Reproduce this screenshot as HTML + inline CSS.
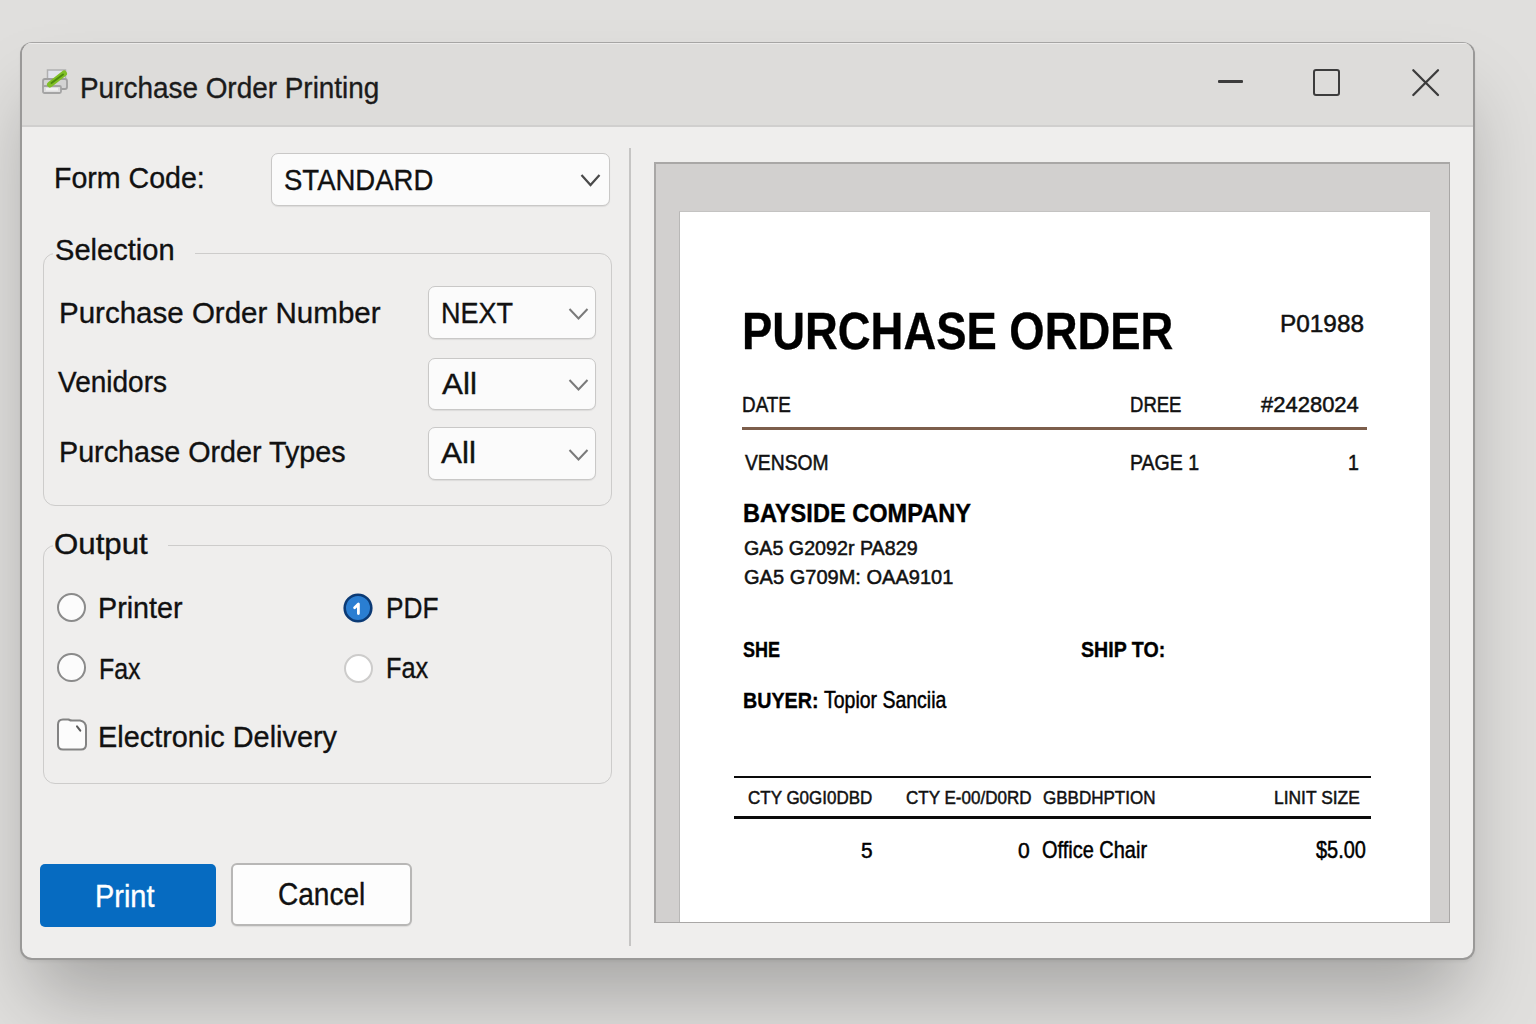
<!DOCTYPE html>
<html><head><meta charset="utf-8">
<style>
html,body{margin:0;padding:0;width:1536px;height:1024px;overflow:hidden;background:#e0dfdd;font-family:"Liberation Sans",sans-serif;}
.a{position:absolute;box-sizing:border-box;}
.t{position:absolute;white-space:nowrap;line-height:1;transform-origin:0 0;font-family:"Liberation Sans",sans-serif;-webkit-text-stroke:0.35px currentColor;}
#win{position:absolute;left:20px;top:42px;width:1455px;height:918px;box-sizing:border-box;border:2px solid #9a9998;border-top:1.5px solid #a6a5a4;border-radius:12px;background:#efeeed;box-shadow:0 48px 72px -12px rgba(0,0,0,0.26),0 2px 3px rgba(0,0,0,0.05);overflow:hidden;}
#tb{position:absolute;left:0;top:0;right:0;height:82px;background:#dddcda;border-bottom:2px solid #d0cfce;box-shadow:inset 0 1px 0 #ecebea;}
.dd{position:absolute;box-sizing:border-box;background:#fbfbfb;border:1.5px solid #c9c8c7;border-radius:7px;box-shadow:0 1px 1px rgba(0,0,0,0.08);}
.grp{position:absolute;box-sizing:border-box;border:1.5px solid #cdcccb;border-radius:12px;}
.gap{position:absolute;background:#efeeed;}
.radio{position:absolute;box-sizing:border-box;border-radius:50%;}
</style></head><body>
<div id="win"><div id="tb"></div></div>

<!-- title icon -->
<svg class="a" style="left:40px;top:66px" width="32" height="30" viewBox="0 0 32 30">
 <rect x="7.5" y="4" width="18" height="13" fill="#e2e4ec" stroke="#b0b0b0" stroke-width="1.5"/>
 <rect x="3" y="13" width="24" height="10" rx="2" fill="#d3d3d3" stroke="#a0a0a0" stroke-width="1.8"/>
 <rect x="3" y="20" width="18" height="7" rx="1.5" fill="#dedede" stroke="#a4a4a4" stroke-width="1.8"/>
 <rect x="6" y="22" width="12" height="2.5" fill="#f2f2f2"/>
 <path d="M10 18.5 L24 7.5" stroke="#7fbf26" stroke-width="6" stroke-linecap="round"/>
 <path d="M11.5 17 L23 8.5" stroke="#4f8c0e" stroke-width="2" stroke-linecap="round"/>
</svg>

<!-- window controls -->
<div class="a" style="left:1218px;top:80px;width:25px;height:2.5px;background:#3c3c3c;border-radius:1px"></div>
<div class="a" style="left:1313px;top:69px;width:27px;height:26.5px;border:2.5px solid #3c3c3c;border-radius:3px"></div>
<svg class="a" style="left:1410px;top:67px" width="32" height="32" viewBox="0 0 32 32">
 <path d="M3.3 3.3 L28 28 M28 3.3 L3.3 28" stroke="#3c3c3c" stroke-width="2.3" stroke-linecap="round"/>
</svg>

<!-- separator -->
<div class="a" style="left:629px;top:148px;width:1.5px;height:798px;background:#c6c5c4"></div>

<!-- form code dropdown -->
<div class="dd" style="left:271px;top:152.5px;width:338.5px;height:53px"></div>
<svg class="a" style="left:578px;top:171px" width="26" height="18" viewBox="0 0 26 18"><path d="M3.5 4 L12.5 14 L21.5 4" fill="none" stroke="#4a4a4a" stroke-width="2.2"/></svg>

<!-- selection group -->
<div class="grp" style="left:43px;top:253px;width:568.5px;height:253px"></div>
<div class="gap" style="left:53px;top:248px;width:142px;height:10px"></div>

<div class="dd" style="left:428px;top:285.7px;width:168px;height:53.5px"></div>
<div class="dd" style="left:428px;top:358px;width:168px;height:52.4px"></div>
<div class="dd" style="left:428px;top:427.2px;width:168px;height:52.8px"></div>
<svg class="a" style="left:566px;top:305px" width="26" height="18" viewBox="0 0 26 18"><path d="M3.5 4 L12.5 13.5 L21.5 4" fill="none" stroke="#7a7a7a" stroke-width="2"/></svg>
<svg class="a" style="left:566px;top:376px" width="26" height="18" viewBox="0 0 26 18"><path d="M3.5 4 L12.5 13.5 L21.5 4" fill="none" stroke="#7a7a7a" stroke-width="2"/></svg>
<svg class="a" style="left:566px;top:445.5px" width="26" height="18" viewBox="0 0 26 18"><path d="M3.5 4 L12.5 13.5 L21.5 4" fill="none" stroke="#7a7a7a" stroke-width="2"/></svg>

<!-- output group -->
<div class="grp" style="left:43px;top:545px;width:569px;height:239px"></div>
<div class="gap" style="left:53px;top:540px;width:115px;height:10px"></div>

<div class="radio" style="left:56.8px;top:593.3px;width:29px;height:29px;border:2px solid #8b8b8b;background:#fcfcfc"></div>
<div class="radio" style="left:57px;top:653px;width:28.5px;height:28.5px;border:2px solid #8b8b8b;background:#fcfcfc"></div>
<svg class="a" style="left:342px;top:592px" width="32" height="32" viewBox="0 0 32 32">
 <circle cx="16" cy="16" r="13.3" fill="#2a7ed2" stroke="#0b3a75" stroke-width="2.6"/>
 <path d="M12.6 15.8 L16.4 12 L16.4 21.6" fill="none" stroke="#ffffff" stroke-width="2.8" stroke-linejoin="round" stroke-linecap="round"/>
</svg>
<div class="radio" style="left:344.3px;top:653.5px;width:29px;height:29px;border:2px solid #cdcccb;background:#ffffff"></div>
<svg class="a" style="left:50px;top:710px" width="45" height="50" viewBox="0 0 45 50">
 <path d="M8 14.5 Q8 9.5 13 9.5 L18.5 9.5 Q21 10.8 23 10.5 L30 10.5 Q36 11.5 36 18 L36 34.5 Q36 39.5 31 39.5 L13 39.5 Q8 39.5 8 34.5 Z" fill="#fcfcfc" stroke="#838383" stroke-width="2"/>
 <path d="M27 16.3 L30.3 20.6" stroke="#5a5a5a" stroke-width="2" stroke-linecap="round"/>
</svg>

<!-- buttons -->
<div class="a" style="left:40px;top:864.3px;width:175.5px;height:62.7px;background:#066bc1;border-radius:5px"></div>
<div class="a" style="left:230.5px;top:863px;width:181px;height:62.5px;background:#fdfdfd;border:2px solid #b8b7b6;border-radius:6px;box-shadow:0 1px 1px rgba(0,0,0,0.08)"></div>

<!-- preview -->
<div class="a" style="left:654px;top:162.4px;width:796px;height:760.8px;background:#d2d0cf;border:2px solid #a9a7a6;border-right-width:1.5px;border-bottom-width:1.5px"></div>
<div class="a" style="left:678.6px;top:211.2px;width:751px;height:711px;background:#ffffff;border-left:1.5px solid #b9b8b7;border-top:1.5px solid #c4c3c2"></div>
<div class="a" style="left:741.5px;top:427px;width:625.3px;height:2.6px;background:#7c5e4b"></div>
<div class="a" style="left:733.6px;top:775.5px;width:637.4px;height:2.8px;background:#0a0a0a"></div>
<div class="a" style="left:733.6px;top:816px;width:637.4px;height:2.8px;background:#0a0a0a"></div>

<div class="t" style="left:79.51px;top:73.1px;font-size:29.5px;font-weight:400;color:#1b1b1b;transform:scaleX(0.946);-webkit-text-stroke-width:0.35px">Purchase Order Printing</div>
<div class="t" style="left:53.5px;top:163.4px;font-size:30px;font-weight:400;color:#111;transform:scaleX(0.9519);-webkit-text-stroke-width:0.35px">Form Code:</div>
<div class="t" style="left:284.28px;top:165.2px;font-size:30px;font-weight:400;color:#111;transform:scaleX(0.9175);-webkit-text-stroke-width:0.35px">STANDARD</div>
<div class="t" style="left:55.33px;top:235.4px;font-size:30px;font-weight:400;color:#111;transform:scaleX(0.9686);-webkit-text-stroke-width:0.35px">Selection</div>
<div class="t" style="left:58.6px;top:298.4px;font-size:29.5px;font-weight:400;color:#111;transform:scaleX(1.0006);-webkit-text-stroke-width:0.35px">Purchase Order Number</div>
<div class="t" style="left:58.3px;top:367px;font-size:29.5px;font-weight:400;color:#111;transform:scaleX(0.9491);-webkit-text-stroke-width:0.35px">Venidors</div>
<div class="t" style="left:58.65px;top:437.3px;font-size:29.5px;font-weight:400;color:#111;transform:scaleX(0.9729);-webkit-text-stroke-width:0.35px">Purchase Order Types</div>
<div class="t" style="left:440.8px;top:297.8px;font-size:30px;font-weight:400;color:#111;transform:scaleX(0.9013);-webkit-text-stroke-width:0.35px">NEXT</div>
<div class="t" style="left:442.0px;top:368.5px;font-size:29.5px;font-weight:400;color:#111;transform:scaleX(1.0645);-webkit-text-stroke-width:0.35px">All</div>
<div class="t" style="left:441.0px;top:438.2px;font-size:29.5px;font-weight:400;color:#111;transform:scaleX(1.0645);-webkit-text-stroke-width:0.35px">All</div>
<div class="t" style="left:54.44px;top:529px;font-size:29.5px;font-weight:400;color:#111;transform:scaleX(1.0586);-webkit-text-stroke-width:0.35px">Output</div>
<div class="t" style="left:98.35px;top:592.6px;font-size:29.5px;font-weight:400;color:#111;transform:scaleX(0.9729);-webkit-text-stroke-width:0.35px">Printer</div>
<div class="t" style="left:98.61px;top:653.6px;font-size:29.5px;font-weight:400;color:#111;transform:scaleX(0.8447);-webkit-text-stroke-width:0.35px">Fax</div>
<div class="t" style="left:98.48px;top:721.9px;font-size:30px;font-weight:400;color:#111;transform:scaleX(0.9622);-webkit-text-stroke-width:0.35px">Electronic Delivery</div>
<div class="t" style="left:385.62px;top:592.6px;font-size:29.5px;font-weight:400;color:#111;transform:scaleX(0.8893);-webkit-text-stroke-width:0.35px">PDF</div>
<div class="t" style="left:385.68px;top:653.2px;font-size:29.5px;font-weight:400;color:#111;transform:scaleX(0.8596);-webkit-text-stroke-width:0.35px">Fax</div>
<div class="t" style="left:95.3px;top:880.8px;font-size:30.5px;font-weight:400;color:#fff;transform:scaleX(0.9475);-webkit-text-stroke-width:0.35px">Print</div>
<div class="t" style="left:277.78px;top:878.7px;font-size:30.5px;font-weight:400;color:#111;transform:scaleX(0.9196);-webkit-text-stroke-width:0.35px">Cancel</div>
<div class="t" style="left:741.98px;top:305px;font-size:52px;font-weight:700;color:#000;transform:scaleX(0.8729);-webkit-text-stroke-width:0.35px">PURCHASE ORDER</div>
<div class="t" style="left:1279.67px;top:311.7px;font-size:24px;font-weight:400;color:#111;transform:scaleX(1.015);-webkit-text-stroke-width:0.5px">P01988</div>
<div class="t" style="left:742.02px;top:394px;font-size:22.5px;font-weight:400;color:#111;transform:scaleX(0.8393);-webkit-text-stroke-width:0.5px">DATE</div>
<div class="t" style="left:1130.35px;top:393.9px;font-size:22.5px;font-weight:400;color:#111;transform:scaleX(0.8233);-webkit-text-stroke-width:0.5px">DREE</div>
<div class="t" style="left:1260.8px;top:393.9px;font-size:22.5px;font-weight:400;color:#111;transform:scaleX(0.977);-webkit-text-stroke-width:0.5px">#2428024</div>
<div class="t" style="left:745.0px;top:453px;font-size:21.5px;font-weight:400;color:#111;transform:scaleX(0.8978);-webkit-text-stroke-width:0.5px">VENSOM</div>
<div class="t" style="left:1130.18px;top:453.2px;font-size:21.5px;font-weight:400;color:#111;transform:scaleX(0.9082);-webkit-text-stroke-width:0.5px">PAGE 1</div>
<div class="t" style="left:1347.68px;top:453.2px;font-size:21.5px;font-weight:400;color:#111;transform:scaleX(0.9111);-webkit-text-stroke-width:0.5px">1</div>
<div class="t" style="left:743.19px;top:500.3px;font-size:26px;font-weight:700;color:#000;transform:scaleX(0.9068);-webkit-text-stroke-width:0.35px">BAYSIDE COMPANY</div>
<div class="t" style="left:744.02px;top:537.6px;font-size:20px;font-weight:400;color:#111;transform:scaleX(0.984);-webkit-text-stroke-width:0.5px">GA5 G2092r PA829</div>
<div class="t" style="left:744.0px;top:566.8px;font-size:20px;font-weight:400;color:#111;transform:scaleX(1.0019);-webkit-text-stroke-width:0.5px">GA5 G709M: OAA9101</div>
<div class="t" style="left:742.96px;top:639.7px;font-size:21.5px;font-weight:700;color:#000;transform:scaleX(0.8381);-webkit-text-stroke-width:0.35px">SHE</div>
<div class="t" style="left:1080.99px;top:639.7px;font-size:21.5px;font-weight:700;color:#000;transform:scaleX(0.9111);-webkit-text-stroke-width:0.35px">SHIP TO:</div>
<div class="t" style="left:742.9px;top:690.1px;font-size:22px;font-weight:700;color:#000;transform:scaleX(0.8951);-webkit-text-stroke-width:0.35px">BUYER:</div>
<div class="t" style="left:824.2px;top:688.1px;font-size:24.5px;font-weight:400;color:#000;transform:scaleX(0.7948);-webkit-text-stroke-width:0.5px">Topior Sanciia</div>
<div class="t" style="left:747.61px;top:788px;font-size:19px;font-weight:400;color:#111;transform:scaleX(0.8942);-webkit-text-stroke-width:0.5px">CTY G0GI0DBD</div>
<div class="t" style="left:905.9px;top:788px;font-size:19px;font-weight:400;color:#111;transform:scaleX(0.8964);-webkit-text-stroke-width:0.5px">CTY E-00/D0RD</div>
<div class="t" style="left:1042.7px;top:788px;font-size:19px;font-weight:400;color:#111;transform:scaleX(0.8951);-webkit-text-stroke-width:0.5px">GBBDHPTION</div>
<div class="t" style="left:1273.98px;top:788px;font-size:19px;font-weight:400;color:#111;transform:scaleX(0.9174);-webkit-text-stroke-width:0.5px">LINIT SIZE</div>
<div class="t" style="left:861.07px;top:840.3px;font-size:22.5px;font-weight:400;color:#000;transform:scaleX(0.9273);-webkit-text-stroke-width:0.5px">5</div>
<div class="t" style="left:1017.56px;top:840.3px;font-size:22.5px;font-weight:400;color:#000;transform:scaleX(0.9364);-webkit-text-stroke-width:0.5px">0</div>
<div class="t" style="left:1042.09px;top:838.3px;font-size:24.5px;font-weight:400;color:#000;transform:scaleX(0.8148);-webkit-text-stroke-width:0.5px">Office Chair</div>
<div class="t" style="left:1315.9px;top:838.3px;font-size:24.5px;font-weight:400;color:#000;transform:scaleX(0.8148);-webkit-text-stroke-width:0.5px">$5.00</div>
</body></html>
